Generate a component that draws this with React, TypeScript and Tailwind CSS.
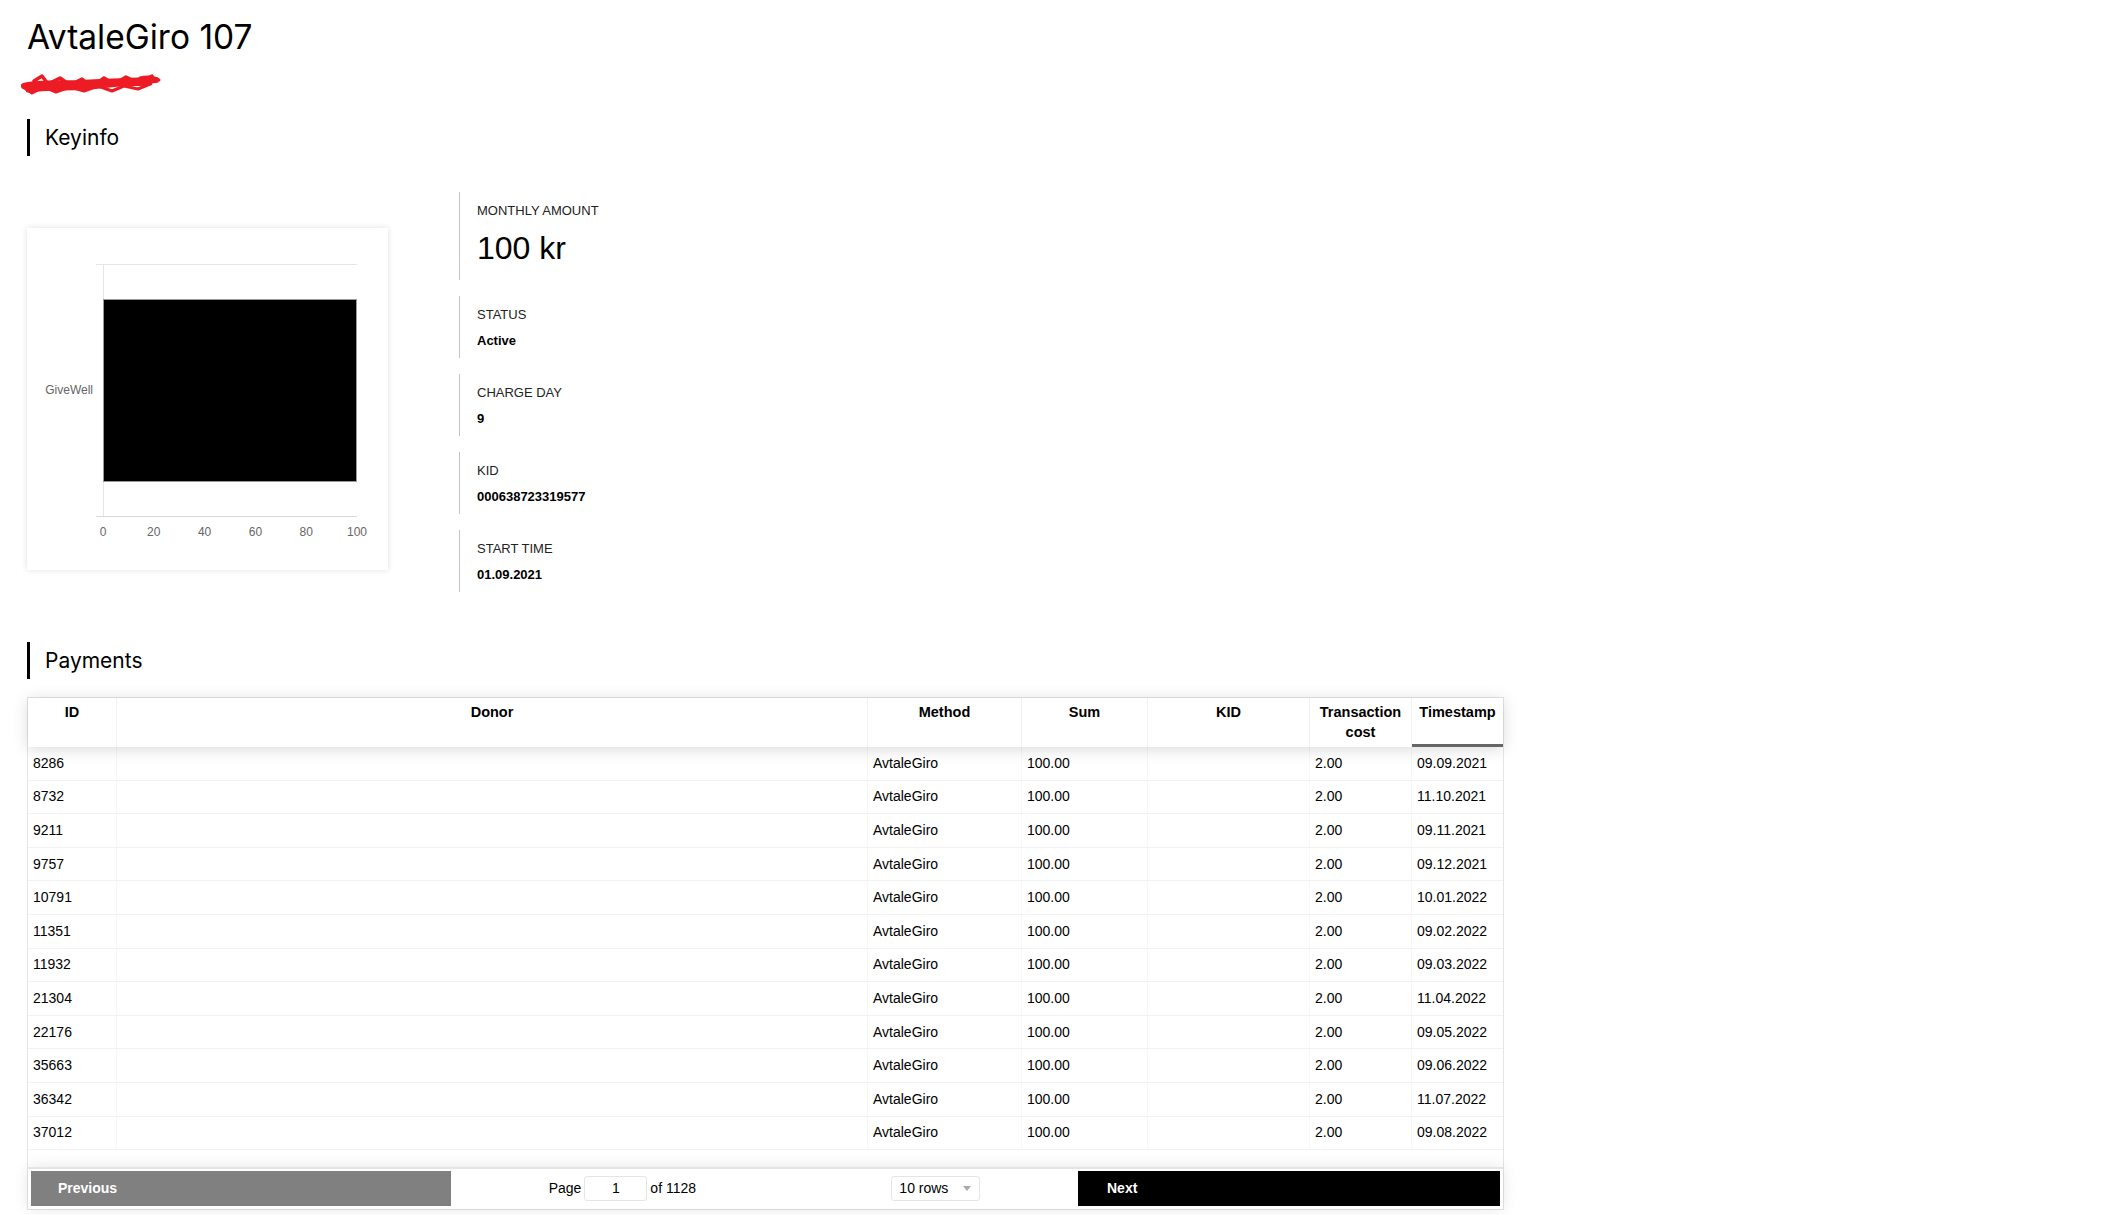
import React from "react";

const rows: [string, string][] = [
  ["8286", "09.09.2021"],
  ["8732", "11.10.2021"],
  ["9211", "09.11.2021"],
  ["9757", "09.12.2021"],
  ["10791", "10.01.2022"],
  ["11351", "09.02.2022"],
  ["11932", "09.03.2022"],
  ["21304", "11.04.2022"],
  ["22176", "09.05.2022"],
  ["35663", "09.06.2022"],
  ["36342", "11.07.2022"],
  ["37012", "09.08.2022"],
];

const gridCols = "grid grid-cols-[89px_751px_154px_126px_162px_102px_91px]";

function SectionHeader({ children }: { children: React.ReactNode }) {
  return (
    <div className="flex h-[37px] items-center border-l-[3px] border-black pl-[15px] font-['Inter','Liberation_Sans',sans-serif] text-[21px] leading-[26px] text-black">
      {children}
    </div>
  );
}

function Scribble() {
  return (
    <svg width="142" height="24" viewBox="0 0 142 24" className="-ml-[7px] block">
      <g fill="none" stroke="#ed1c24" strokeLinecap="round" strokeLinejoin="round">
        <path d="M4 14 C20 10, 40 12, 60 11 S100 9, 136 8" strokeWidth="6" />
        <path d="M8 18 C30 15, 55 17, 80 14 S115 12, 130 11" strokeWidth="5" />
        <path d="M14 9 L22 4 L28 12 L40 6 L50 13 L62 7 L72 15 L84 6 L94 12 L106 5 L118 11 L132 4" strokeWidth="3.5" />
        <path d="M3 15 L12 21 L24 15 L36 20 L50 15 L64 19 L78 14 L92 19 L104 14 L118 17 L130 12" strokeWidth="3" />
        <path d="M120 6 C128 4, 134 5, 139 8" strokeWidth="3" />
      </g>
    </svg>
  );
}

function Chart() {
  const ticks = [0, 20, 40, 60, 80, 100];
  const x0 = 76;
  const x1 = 330;
  return (
    <svg width="361" height="342" viewBox="0 0 361 342" className="block">
      <line x1="69" y1="36.5" x2={x1} y2="36.5" stroke="#e6e6e6" strokeWidth="1" />
      <line x1="69" y1="288.5" x2={x1} y2="288.5" stroke="#d9d9d9" strokeWidth="1" />
      <line x1={x0 + 0.5} y1="36" x2={x0 + 0.5} y2="288" stroke="#e6e6e6" strokeWidth="1" />
      <rect x={x0 + 0.5} y="71.5" width={x1 - x0 - 1} height="182" fill="#000" stroke="#999" strokeWidth="1" />
      <text x="66" y="166" textAnchor="end" fontSize="12" fill="#666" fontFamily="'Liberation Sans', Arial, sans-serif">
        GiveWell
      </text>
      {ticks.map((t, i) => (
        <text
          key={t}
          x={x0 + ((x1 - x0) * i) / 5}
          y="308"
          textAnchor="middle"
          fontSize="12"
          fill="#666"
          fontFamily="'Liberation Sans', Arial, sans-serif"
        >
          {t}
        </text>
      ))}
    </svg>
  );
}

function InfoBlock({ label, value, big }: { label: string; value: string; big?: boolean }) {
  return (
    <div className={`border-l border-[#c4c4c4] pl-[17px] pt-[11px] ${big ? "pb-[13px]" : "pb-[9px]"}`}>
      <div className="text-[13px] leading-[16px] text-[#222]">{label}</div>
      {big ? (
        <div className="mt-[10px] text-[32px] leading-[38px] text-black">{value}</div>
      ) : (
        <div className="mt-[10px] text-[13px] leading-[16px] font-bold text-black">{value}</div>
      )}
    </div>
  );
}

export default function App() {
  const headers: { label: React.ReactNode; sorted?: boolean }[] = [
    { label: "ID" },
    { label: "Donor" },
    { label: "Method" },
    { label: "Sum" },
    { label: "KID" },
    { label: <>Transaction<br />cost</> },
    { label: "Timestamp", sorted: true },
  ];
  return (
    <div className="min-h-screen bg-white pl-[27px] pt-[17px] font-['Liberation_Sans',Arial,sans-serif] text-black">
      <h1 className="font-['Inter','Liberation_Sans',sans-serif] text-[33.5px] leading-[40px] font-normal">AvtaleGiro 107</h1>
      <div className="mt-[15px]">
        <Scribble />
      </div>
      <div className="mt-[23px]">
        <SectionHeader>Keyinfo</SectionHeader>
      </div>

      <div className="mt-[36px] flex items-start">
        <div className="mt-[36px] w-[361px] h-[342px] bg-white shadow-[0_0_6px_rgba(0,0,0,0.13)]">
          <Chart />
        </div>
        <div className="ml-[71px] flex flex-col gap-[16px]">
          <InfoBlock label="MONTHLY AMOUNT" value="100 kr" big />
          <InfoBlock label="STATUS" value="Active" />
          <InfoBlock label="CHARGE DAY" value="9" />
          <InfoBlock label="KID" value="000638723319577" />
          <InfoBlock label="START TIME" value="01.09.2021" />
        </div>
      </div>

      <div className="mt-[50px]">
        <SectionHeader>Payments</SectionHeader>
      </div>

      <div className="mt-[18px] w-[1477px] border border-black/10 text-[14px]">
        <div className={`${gridCols} relative z-10 bg-white shadow-[0_2px_15px_0_rgba(0,0,0,0.15)]`}>
          {headers.map((h, i) => (
            <div
              key={i}
              className={`h-[49px] px-[5px] pt-[4px] text-center text-[14.5px] leading-[20px] font-bold ${
                i < headers.length - 1 ? "border-r border-black/5" : ""
              } ${h.sorted ? "shadow-[inset_0_-3px_0_0_rgba(0,0,0,0.6)]" : ""}`}
            >
              {h.label}
            </div>
          ))}
        </div>
        <div>
          {rows.map(([id, ts]) => (
            <div key={id} className={`${gridCols} h-[33.6px] border-b border-black/5`}>
              {[id, "", "AvtaleGiro", "100.00", "", "2.00", ts].map((c, j) => (
                <div
                  key={j}
                  className={`flex items-center overflow-hidden whitespace-nowrap px-[5px] ${
                    j < 6 ? "border-r border-black/[0.03]" : ""
                  }`}
                >
                  {c}
                </div>
              ))}
            </div>
          ))}
          <div className="h-[17px]" />
        </div>
        <div className="flex border-t-2 border-black/10 px-[3px] pt-[2px] pb-[3px] shadow-[0_0_15px_0_rgba(0,0,0,0.1)]">
          <div className="flex h-[35px] w-[420px] shrink-0 items-center bg-[#808080] pl-[27px] text-[14px] font-bold text-white">
            Previous
          </div>
          <div className="flex flex-1 items-center justify-around">
            <div className="flex items-center text-[14px]">
              <span>Page</span>
              <div className="mx-[3px] flex h-[25px] w-[63px] items-center justify-center rounded-[3px] border border-black/10">
                1
              </div>
              <span>of 1128</span>
            </div>
            <div className="flex h-[25px] w-[89px] items-center justify-between rounded-[3px] border border-black/10 pl-[7px] pr-[8px] text-[14px]">
              <span>10 rows</span>
              <svg width="8" height="5" viewBox="0 0 8 5">
                <path d="M0 0 L8 0 L4 5 Z" fill="#aaa" />
              </svg>
            </div>
          </div>
          <div className="flex h-[35px] w-[422px] shrink-0 items-center bg-black pl-[29px] text-[14px] font-bold text-white">
            Next
          </div>
        </div>
      </div>
    </div>
  );
}
